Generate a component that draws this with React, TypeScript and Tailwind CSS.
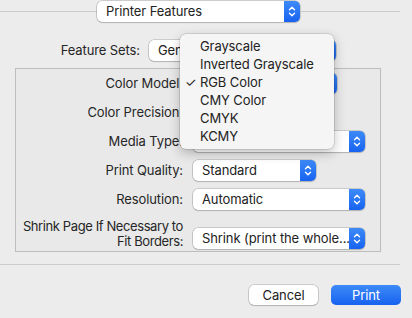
import type { ReactNode } from "react";

const MENU_ITEMS = ["Grayscale", "Inverted Grayscale", "RGB Color", "CMY Color", "CMYK", "KCMY"];

function Stepper() {
  return (
    <div className="w-[16px] self-stretch rounded-r-[5px] bg-gradient-to-b from-[#3d8af7] to-[#1762f0] flex items-center justify-center">
      <svg width="16" height="21" viewBox="0 0 16 21" fill="none" stroke="white" strokeWidth="1.4" strokeLinecap="round" strokeLinejoin="round">
        <path d="M5.5 8.7 L8 6.2 L10.5 8.7" />
        <path d="M5.5 12.3 L8 14.8 L10.5 12.3" />
      </svg>
    </div>
  );
}

function PopUp({ value, width }: { value: string; width: string }) {
  return (
    <div
      className={`${width} h-[21px] flex rounded-[5px] bg-white shadow-[0_0_0_0.5px_rgba(0,0,0,0.28),0_1px_1.5px_rgba(0,0,0,0.12)]`}
    >
      <span className="flex-1 min-w-0 whitespace-nowrap overflow-hidden pl-[9px] leading-[21px] text-[#222]">{value}</span>
      <Stepper />
    </div>
  );
}

function Row({ label, children }: { label: ReactNode; children: ReactNode }) {
  return (
    <div className="flex items-center gap-[10px]">
      <div className="w-[167px] text-right whitespace-nowrap text-[#262626]">{label}</div>
      {children}
    </div>
  );
}

export default function App() {
  return (
    <div
      className="relative w-[412px] h-[318px] overflow-hidden bg-[#ececec] text-[13px] tracking-[-0.1px] text-[#262626]"
      style={{ fontFamily: "Inter, 'Liberation Sans', sans-serif" }}
    >
      {/* header popup */}
      <div className="flex items-center pt-[1px] pr-[12px]">
        <div className="w-[97px] h-px bg-[#cbcbcb]" />
        <PopUp value="Printer Features" width="w-[203px]" />
        <div className="flex-1 h-px bg-[#cbcbcb]" />
      </div>

      <div className="flex items-center gap-[9px] mt-[18px]">
        <div className="w-[140px] text-right whitespace-nowrap">Feature Sets:</div>
        <PopUp value="General" width="w-[187px]" />
      </div>

      <div className="ml-[15px] mt-[7px] w-[366px] border border-[#bdbdbd] bg-[#e9e9e9] pt-[4px] pb-[2px]">
        <div className="flex flex-col gap-[8px]">
          <Row label="Color Model:">
            <PopUp value="RGB Color" width="w-[144px]" />
          </Row>
          <Row label="Color Precision:">
            <PopUp value="Best" width="w-[110px]" />
          </Row>
          <Row label="Media Type:">
            <PopUp value="Plain Paper" width="w-[172px]" />
          </Row>
          <Row label="Print Quality:">
            <PopUp value="Standard" width="w-[123px]" />
          </Row>
          <Row label="Resolution:">
            <PopUp value="Automatic" width="w-[172px]" />
          </Row>
        </div>
        <div className="flex items-end gap-[10px] mt-[9px]">
          <div className="w-[167px] text-right whitespace-nowrap leading-[15px] tracking-[-0.4px]">
            Shrink Page If Necessary to
            <br />
            Fit Borders:
          </div>
          <PopUp value="Shrink (print the whole..." width="w-[172px]" />
        </div>
      </div>

      <div className="mt-[12px] w-[400px] h-px bg-[#cbcbcb]" />

      <div className="flex justify-end gap-[13px] mt-[20px] pr-[11px]">
        <button className="w-[69px] h-[20px] rounded-[5px] bg-white text-[#222] leading-[20px] shadow-[0_0_0_0.5px_rgba(0,0,0,0.28),0_1px_1.5px_rgba(0,0,0,0.12)]">
          Cancel
        </button>
        <button className="w-[70px] h-[20px] rounded-[5px] bg-gradient-to-b from-[#3d8af7] to-[#1762f0] text-white leading-[20px]">
          Print
        </button>
      </div>

      {/* open menu */}
      <div className="absolute left-[180px] top-[34px] w-[154px] h-[115px] rounded-[6px] bg-[#f5f5f5] pt-[4px] shadow-[0_0_0_0.5px_rgba(0,0,0,0.2),0_4px_12px_rgba(0,0,0,0.25)]">
        {MENU_ITEMS.map((item) => (
          <div key={item} className="flex items-center h-[18px] text-[#222]">
            <span className="w-[20px] pl-[5px]">{item === "RGB Color" ? "✓" : ""}</span>
            <span>{item}</span>
          </div>
        ))}
      </div>
    </div>
  );
}
